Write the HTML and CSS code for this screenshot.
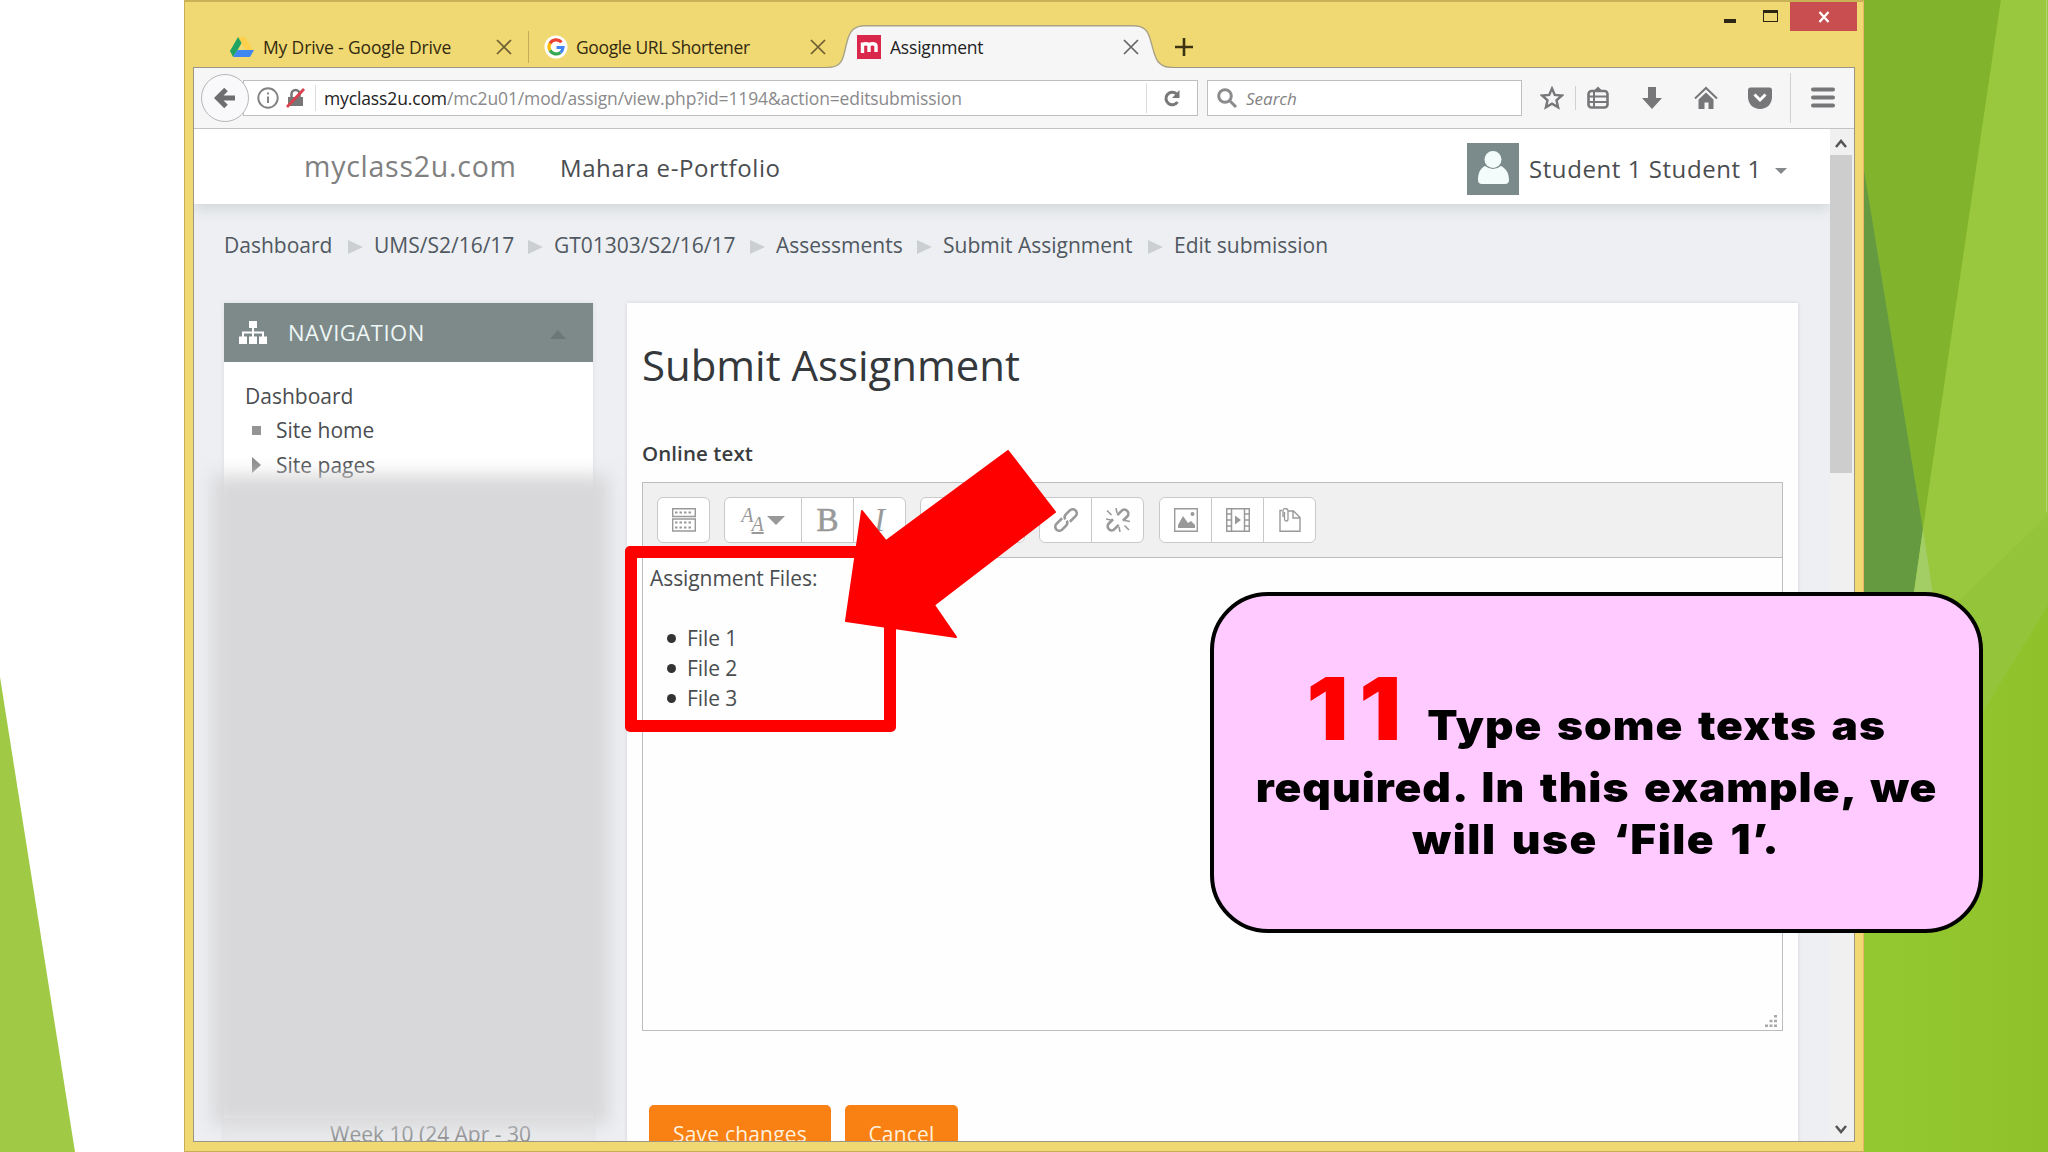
FILE: index.html
```html
<!DOCTYPE html>
<html lang="en">
<head>
<meta charset="utf-8">
<title>Submit Assignment</title>
<link rel="stylesheet" href="styles.css">
</head>
<body>
<main class="slide">
  <svg class="facets" viewBox="0 0 2048 1152" aria-hidden="true">
    <defs>
      <linearGradient id="low" x1="0" y1="0" x2="1" y2="0"><stop offset="0" stop-color="#94c932"/><stop offset="1" stop-color="#8fc12a"/></linearGradient>
    </defs>
    <path d="M0 677 75 1152H0Z" fill="#a0ca46"/>
    <path d="M1860 0H2048V1152H1860Z" fill="url(#low)"/>
    <path d="M1860 0H2001L1923 529 1860 145Z" fill="#82b32d"/>
    <path d="M1860 145 1923 529 1910 620H1860Z" fill="#659a41"/>
    <path d="M2001 0H2048V515L1970 600H1933L1923 529Z" fill="#99c73d"/>
    <path d="M2048 515V605L1975 725 1960 600Z" fill="#94c43a"/>
    <path d="M1923 529 1910 620H1937Z" fill="#a3ce66"/>
    <path d="M2046.500 0V512" stroke="#b2d66f" stroke-width="1"/>
  </svg>

  <section class="window">
    <header class="titlebar">
      <div class="tabs">
        <div class="tab tab-drive">
          <svg class="fav" viewBox="0 0 24 22"><path d="M8 1h7l-8 14-4 6L0 15z" fill="#1fa463"/><path d="M8 1h7l8 13h-7z" fill="#ffd04b"/><path d="M7.500 14H24l-4 7H3z" fill="#3f87f0"/></svg>
          <span class="tab-title">My Drive - Google Drive</span>
          <svg class="x" viewBox="0 0 16 16"><path d="M1 1 15 15M15 1 1 15"/></svg>
        </div>
        <div class="tab tab-google">
          <svg class="fav" viewBox="0 0 24 24"><circle cx="12" cy="12" r="11.500" fill="#fff"/><g fill="none" stroke-width="3.200"><path d="M17.500 7.300A7 7 0 0 0 6 8.400" stroke="#ea4335"/><path d="M6 8.400a7 7 0 0 0 0 7" stroke="#fbbc05"/><path d="M6 15.400a7 7 0 0 0 10.500 2" stroke="#34a853"/><path d="M16.500 17.400A7 7 0 0 0 19 12.500h-6.500" stroke="#4285f4"/></g></svg>
          <span class="tab-title">Google URL Shortener</span>
          <svg class="x" viewBox="0 0 16 16"><path d="M1 1 15 15M15 1 1 15"/></svg>
        </div>
        <div class="tab tab-active">
          <svg class="tab-shape" viewBox="0 0 360 43"><path d="M0 42.500C18 42.500 16 30 20 17 23 5 28 .700 38 .700H306C317 .700 321 5 324 17 328 30 328 42.500 346 42.500V44H0Z" fill="#f6f6f7"/><path d="M0 42.500C18 42.500 16 30 20 17 23 5 28 .700 38 .700H306C317 .700 321 5 324 17 328 30 328 42.500 346 42.500" fill="none" stroke="#a9a387" stroke-width="1.400"/></svg>
          <svg class="fav" viewBox="0 0 24 24"><path d="M0 0h24v24H0z" fill="#d9284c"/><path d="M5.500 18V7.500M5.500 11c0-3 6.500-3 6.500 0v6M12 11c0-3 7-3 7 0v6" stroke="#fff" stroke-width="3.400" fill="none"/></svg>
          <span class="tab-title">Assignment</span>
          <svg class="x" viewBox="0 0 16 16"><path d="M1 1 15 15M15 1 1 15"/></svg>
        </div>
        <svg class="plus" viewBox="0 0 18 18"><path d="M9 0v18M0 9h18"/></svg>
      </div>
      <div class="controls">
        <i class="min"></i><i class="max"></i>
        <span class="close"><svg viewBox="0 0 12 12"><path d="M1.500 1 10.500 11M10.500 1 1.500 11"/></svg></span>
      </div>
    </header>

    <div class="client">
      <div class="toolbar">
        <div class="back"><svg viewBox="0 0 22 22"><path d="M21 11H4M12 2.500 3.500 11 12 19.500" /></svg></div>
        <div class="url">
          <svg class="info" viewBox="0 0 22 22"><circle cx="11" cy="11" r="9.700"/><path d="M11 9.500V16M11 5.500v2"/></svg>
          <svg class="lock" viewBox="0 0 20 20"><path d="M2 9h15v9H2z" fill="#777"/><path d="M5.500 9V6a4 4 0 0 1 8 0v3" fill="none" stroke="#777" stroke-width="2.500"/><path d="M1 19 18 1" stroke="#d9414f" stroke-width="2.800"/></svg>
          <span class="address"><b>myclass2u.com</b>/mc2u01/mod/assign/view.php?id=1194&amp;action=editsubmission</span>
          <span class="reload"><svg viewBox="0 0 18 18"><path d="M13.500 4.800A6.300 6.300 0 1 0 14.500 13" fill="none" stroke="#777" stroke-width="3"/><path d="M16.500 1v8H9z" fill="#777"/></svg></span>
        </div>
        <div class="search"><svg viewBox="0 0 21 21"><circle cx="8" cy="8" r="6.300"/><path d="M12.500 12.500 19 19"/></svg><span>Search</span></div>
        <div class="tools">
          <svg viewBox="0 0 24 24"><path d="m12 2.500 2.800 6.400 7 .7-5.300 4.700 1.600 7L12 17.700l-6.100 3.600 1.600-7L2.200 9.600l7-.7z" fill="none" stroke="#77777a" stroke-width="2.400"/></svg>
          <i class="rule short"></i>
          <svg viewBox="0 0 24 24"><rect x="2.500" y="5" width="19" height="16.500" rx="3" fill="none" stroke="#77777a" stroke-width="2.600"/><path d="M8 4.500 12 .500l4 4z" fill="#77777a"/><path d="M3 10.500h18M3 16h18M8 5v16" stroke="#77777a" stroke-width="2"/></svg>
          <svg viewBox="0 0 24 24"><path d="M8 1h8v11h6L12 23 2 12h6z" fill="#77777a"/></svg>
          <svg viewBox="0 0 24 24"><path d="M1 12.500 12 2l11 10.500" fill="none" stroke="#77777a" stroke-width="2"/><path d="M4.500 13.500 12 6.500l7.500 7V23h-5v-6.500h-4V23h-6z" fill="#77777a"/></svg>
          <svg viewBox="0 0 24 24"><path d="M2.500 1.500h19q2.500 0 2.500 2.500v7c0 7-5 12-12 12S0 18 0 11V4q0-2.500 2.500-2.500z" fill="#77777a"/><path d="m6.500 8.500 5.500 5.500 5.500-5.500" fill="none" stroke="#fff" stroke-width="3"/></svg>
          <i class="rule tall"></i>
          <svg viewBox="0 0 24 24"><path d="M2 4h20M2 12h20M2 20h20" transform="translate(0 -.5)" stroke="#77777a" stroke-width="4" stroke-linecap="round"/></svg>
        </div>
      </div>

      <div class="viewport">
        <div class="page">
          <nav class="site-head">
            <span class="brand">myclass2u.com</span>
            <span class="portfolio">Mahara e-Portfolio</span>
            <span class="avatar"><svg viewBox="0 0 52 52"><rect width="52" height="52" fill="#7b8a8a"/><ellipse cx="26" cy="16.500" rx="8.500" ry="8.500" fill="#f4fbfb"/><path d="M11 37c0-8 3-12 7-14q8 6 16 0c4 2 8 6 8 14q0 4-4 4H15q-4 0-4-4z" fill="#f4fbfb"/></svg></span>
            <span class="user">Student 1 Student 1</span>
            <i class="caret"></i>
          </nav>
          <div class="crumbs">
            <span class="c1">Dashboard</span><i></i><span class="c2">UMS/S2/16/17</span><i></i><span class="c3">GT01303/S2/16/17</span><i></i><span class="c4">Assessments</span><i></i><span class="c5">Submit Assignment</span><i></i><span class="c6">Edit submission</span>
          </div>
          <div class="columns">
            <aside class="block">
              <h2 class="block-head">
                <svg class="sitemap" viewBox="0 0 28 23"><path d="M10 0h8v7h-8zM0 15.500h8V23H0zM10 15.500h8V23h-8zM20 15.500h8V23h-8z" fill="#fff"/><path d="M14 6v10M4 16v-4.500h20V16" fill="none" stroke="#fff" stroke-width="2"/></svg>
                <span>NAVIGATION</span><i class="up"></i>
              </h2>
              <ul class="tree">
                <li>Dashboard</li>
                <li class="sub"><i class="square"></i>Site home</li>
                <li class="sub"><i class="right"></i>Site pages</li>
              </ul>
              <div class="week">Week 10 (24 Apr - 30</div>
              <div class="mask"></div>
            </aside>
            <section class="panel">
              <h1>Submit Assignment</h1>
              <div class="label">Online text</div>
              <div class="editor">
                <div class="editbar">
                  <div class="group"><span><svg viewBox="0 0 24 24"><path d="M.700.700h22.600v7.800H.700zM.700 11h22.600v12H.700z" fill="none" stroke="#999" stroke-width="1.400"/><path d="M3 4.500h18M3 14.500h18M3 19.500h18" stroke="#999" stroke-width="2" stroke-dasharray="2.500 2"/></svg></span></div>
                  <div class="group"><span class="styles"><em>A</em><em class="under">A</em><i></i></span><span class="serif bold">B</span><span class="serif italic">I</span></div>
                  <div class="group"><span><svg viewBox="0 0 24 24"><path d="M8 4h15M8 12h15M8 20h15M1 4h3M1 12h3M1 20h3" stroke="#999" stroke-width="2"/></svg></span><span><svg viewBox="0 0 24 24"><path d="M8 4h15M8 12h15M8 20h15M2 1v6M2 9v6M2 17v6" stroke="#999" stroke-width="2"/></svg></span></div>
                  <div class="group link"><span><svg viewBox="0 0 24 24"><g fill="none" stroke="#999" stroke-width="2.600" transform="rotate(-45 12 12)"><path d="M10.500 8H2.500a4 4 0 0 0 0 8h6a4 4 0 0 0 3.500-3M13.500 16h8a4 4 0 0 0 0-8h-6a4 4 0 0 0-3.500 3"/></g></svg></span><span><svg viewBox="0 0 24 24"><g fill="none" stroke="#999" stroke-width="2.600" transform="rotate(-45 12 12)"><path d="M9 8H3a4 4 0 0 0 0 8h6M15 16h6a4 4 0 0 0 0-8h-6"/></g><path d="M1 2.500 5.500 7M10 0l1 5M0 11l5 1M23 22l-4.500-4.500M14 24l-1-5M24 13.500l-5-1" stroke="#999" stroke-width="1.600"/></svg></span></div>
                  <div class="group"><span><svg viewBox="0 0 24 24"><path d="M.700.700h22.600v22.600H.700z" fill="none" stroke="#999" stroke-width="1.400"/><path d="M4 20v-3l5-9 5 7 3-2 4 4v3z" fill="#999"/><circle cx="18.500" cy="6" r="2" fill="#999"/></svg></span><span><svg viewBox="0 0 24 24"><path d="M.700.700h22.600v22.600H.700zM5.500.700v22.600M18.500.700v22.600M.700 6h4.800M.700 12h4.800M.700 18h4.800M18.500 6h4.800M18.500 12h4.800M18.500 18h4.800" fill="none" stroke="#999" stroke-width="1.500"/><path d="m9 7.500 6 4.500-6 4.500z" fill="#999"/></svg></span><span><svg viewBox="0 0 24 24"><path d="M4 2.500H2v20.800h20V9.500L15.500 3H10M15 3v7h7" fill="none" stroke="#999" stroke-width="1.400"/><path d="M5 9V3q0-2.500 2.500-2.500T10 3v8q0 2-1.700 2T6.500 11V4" fill="none" stroke="#999" stroke-width="1.300"/></svg></span></div>
                </div>
                <div class="content">
                  <p>Assignment Files:</p>
                  <ul><li>File 1</li><li>File 2</li><li>File 3</li></ul>
                  <svg class="grip" viewBox="0 0 12 12"><path d="M9 0h3v2.500H9zM9 4.700h3v2.500H9zM4.500 4.700h3v2.500h-3zM9 9.400h3v2.500H9zM4.500 9.400h3v2.500h-3zM0 9.400h3v2.500H0z" fill="#aaa"/></svg>
                </div>
              </div>
              <div class="actions"><span class="save">Save changes</span><span class="cancel">Cancel</span></div>
            </section>
          </div>
        </div>
        <div class="scroll">
          <svg viewBox="0 0 12 9"><path d="m1 8 5-6 5 6"/></svg>
          <i class="thumb"></i>
          <svg viewBox="0 0 12 9"><path d="m1 1 5 6 5-6"/></svg>
        </div>
      </div>
    </div>
  </section>

  <div class="frame"></div>
  <svg class="arrow" viewBox="0 0 212 189"><path d="M163 1 210 62 89 155 111 187 1 171 17 61 41 91Z" fill="#f00" stroke="#f00" stroke-width="2" stroke-linejoin="round"/></svg>
  <div class="callout">
    <div class="line l1"><span class="num">11</span> <span class="t1">Type some texts as</span></div>
    <div class="line l2">required. In this example, we</div>
    <div class="line l3">will use ‘File 1’.</div>
  </div>
</main>
</body>
</html>
```
FILE: styles.css
```css
* { box-sizing: border-box; }
body { margin: 0; background: #fff; font-family: "Open Sans", "Noto Sans", sans-serif; color: #4a4d50; }
h1, h2, p, ul { margin: 0; padding: 0; font-weight: 400; }
li { list-style: none; }
svg { display: block; flex: none; }
span, i { flex: none; }
.slide { position: relative; width: 2048px; height: 1152px; overflow: hidden; }
.facets { position: absolute; inset: 0; width: 2048px; height: 1152px; }

/* browser window */
.window { position: absolute; left: 184px; top: 0; width: 1680px; height: 1152px; background: #f0d972; border: 1px solid #c8ae55; border-right-color: #e8b56a; border-top: 2px solid #c9b155; padding: 0 8px 9px; display: flex; flex-direction: column; }
.titlebar { height: 65px; flex: none; display: flex; justify-content: space-between; margin-right: -2px; }
.tabs { display: flex; align-items: flex-end; color: #33290f; font-size: 17.500px; white-space: nowrap; }
.tab { display: flex; align-items: center; height: 40px; position: relative; }
.tab-drive { width: 336px; padding-left: 37px; border-right: 1px solid #c4ad58; height: 32px; margin-bottom: 4px; }
.tab-drive .fav { width: 24px; height: 22px; }
.tab-drive .tab-title { width: 233px; margin-left: 9px; letter-spacing: -.150px; }
.tab-google { width: 298px; padding-left: 15px; }
.fav { width: 24px; height: 24px; position: relative; }
.tab-google .tab-title { width: 234px; margin-left: 8px; letter-spacing: -.370px; }
.x { width: 16px; height: 16px; stroke: #6d5d31; stroke-width: 1.700; position: relative; }
.tab-active { width: 346px; padding-left: 30px; color: #222; }
.tab-shape { position: absolute; left: 0; bottom: -1px; width: 360px; height: 43px; }
.tab-active .tab-title { position: relative; width: 233px; margin-left: 9px; letter-spacing: -.200px; }
.tab-active .x { stroke: #666; }
.plus { width: 18px; height: 18px; stroke: #3c3212; stroke-width: 2.600; margin: 0 0 11px 2px; }
.controls { display: flex; align-items: flex-start; }
.min { width: 12px; height: 4px; background: #2e2615; margin: 17px 27px 0 0; }
.max { width: 15px; height: 12px; border: 1.500px solid #2e2615; border-top-width: 3px; margin: 8px 12px 0 0; }
.close { width: 67px; height: 29px; background: #c94e50; display: flex; align-items: center; justify-content: center; }
.close svg { width: 12px; height: 12px; stroke: #fff; stroke-width: 2.300; }

.client { flex: 1; min-height: 0; border: 1px solid #9c9684; background: #f6f6f7; display: flex; flex-direction: column; overflow: hidden; }
.toolbar { height: 61px; flex: none; border-bottom: 1px solid #c3c3c5; display: flex; align-items: center; padding-left: 7px; background: #f6f6f7; }
.back { width: 48px; height: 48px; border: 1.500px solid #b6b6b8; border-radius: 50%; background: #f9f9fb; display: flex; align-items: center; justify-content: center; position: relative; z-index: 1; flex: none; }
.back svg { width: 22px; height: 22px; fill: none; stroke: #6e6e70; stroke-width: 5; }
.url { margin-left: -6px; width: 955px; height: 36px; border: 1px solid #bfbfc1; background: #fff; display: flex; align-items: center; flex: none; }
.info { width: 22px; height: 22px; margin-left: 13px; fill: none; stroke: #828284; stroke-width: 1.900; }
.lock { width: 20px; height: 20px; margin-left: 7px; }
.address { margin-left: 9px; border-left: 1px solid #dcdcdc; padding-left: 8px; width: 831px; line-height: 26px; font-size: 17.500px; letter-spacing: -.130px; color: #8a8a8c; white-space: nowrap; }
.address b { font-weight: 400; color: #222; }
.reload { border-left: 1px solid #dcdcdc; height: 30px; flex: 1; display: flex; align-items: center; justify-content: center; }
.reload svg { width: 18px; height: 18px; }
.search { margin-left: 9px; width: 315px; height: 36px; border: 1px solid #bfbfc1; background: #fff; display: flex; align-items: center; padding-left: 9px; font-size: 17px; font-style: italic; color: #828284; gap: 8px; flex: none; }
.search svg { width: 21px; height: 21px; fill: none; stroke: #8b8b8d; stroke-width: 3; }
.tools { display: flex; align-items: center; margin-left: 18px; }
.tools svg { width: 24px; height: 24px; }
.tools svg + svg { margin-left: 30px; }
.rule { width: 1px; background: #d0d0d2; }
.short { height: 24px; margin: 0 10px 0 11px; }
.tall { height: 50px; margin: 0 20px 0 18px; }

.viewport { flex: 1; min-height: 0; display: flex; }
.page { width: 1636px; background: #edeff2; flex: none; overflow: hidden; }
.site-head { height: 75px; background: #fff; box-shadow: 0 3px 14px rgba(90,100,100,.22); display: flex; align-items: center; white-space: nowrap; }
.brand { width: 256px; margin-left: 110px; font-size: 28.500px; letter-spacing: .750px; color: #808080; line-height: 38px; padding-bottom: 2px; }
.portfolio { width: 907px; font-size: 24px; letter-spacing: .600px; padding-top: 1px; }
.avatar svg { width: 52px; height: 52px; }
.avatar { padding-top: 4px; }
.user { width: 246px; margin-left: 10px; font-size: 24px; letter-spacing: .570px; padding-top: 4px; }
.caret { border: 6px solid transparent; border-top-color: #85888a; border-bottom: 0; margin-top: 8px; }
.crumbs { height: 99px; display: flex; padding: 26px 0 0 30px; font-size: 21px; line-height: 30px; white-space: nowrap; color: #505861; }
.crumbs i { border: 7px solid transparent; border-left: 15px solid #cccfd2; border-right: 0; margin: 10px 11px 0 15px; height: 14px; }
.c1 { width: 109px; } .c2 { width: 139px; } .c3 { width: 181px; } .c4 { width: 126px; } .c5 { width: 190px; }
.columns { display: flex; align-items: stretch; height: 840px; }
.block { width: 369px; margin-left: 30px; background: #fff; position: relative; flex: none; box-shadow: 0 0 5px rgba(0,0,0,.08); }
.block-head { height: 59px; background: #7d8a89; color: #eef6f6; font-size: 22px; display: flex; align-items: center; padding-left: 15px; }
.sitemap { width: 28px; height: 23px; margin-right: 21px; }
.block-head span { width: 262px; letter-spacing: .520px; padding-bottom: 1px; }
.up { border: 8px solid transparent; border-bottom: 9px solid #6c7877; border-top: 0; margin-top: 3px; }
.tree { padding: 17px 21px; font-size: 21px; line-height: 34.300px; }
.sub { display: flex; align-items: center; padding-left: 7px; }
.square { width: 9px; height: 9px; background: #949494; margin-right: 15px; }
.right { border: 8px solid transparent; border-left: 9px solid #8c8c8c; border-right: 0; margin-right: 15px; }
.mask { position: absolute; left: -12px; right: -16px; top: 172px; height: 650px; background: #d8d7d9; filter: blur(9px); }
.week { position: absolute; left: 0; right: 0; top: 815px; height: 50px; padding-left: 106px; font-size: 21px; line-height: 32px; background: #e9eaec; color: #8d8f91; white-space: nowrap; }

/* main panel */
.panel { width: 1171px; margin-left: 34px; background: #fefefe; padding: 32px 15px 0 15px; box-shadow: 0 0 4px rgba(0,0,0,.12); flex: none; position: relative; }
h1 { font-size: 41.900px; line-height: 60px; color: #35383b; white-space: nowrap; }
.label { margin-top: 43px; font-size: 20.500px; line-height: 30px; font-weight: 600; color: #3a3d40; letter-spacing: .080px; }
.editor { margin-top: 14px; height: 549px; border: 1.500px solid #bdbdc0; display: flex; flex-direction: column; }
.editbar { height: 75px; background: #f0f0f1; border-bottom: 1.500px solid #bdbdc0; display: flex; align-items: center; padding-left: 14px; flex: none; }
.group { display: flex; height: 46px; border: 1.500px solid #c9c9cb; border-radius: 6px; background: #fff; margin-right: 14px; overflow: hidden; }
.group > span { width: 51px; display: flex; align-items: center; justify-content: center; }
.group > span + span { border-left: 1px solid #c9c9cb; width: 52px; }
.group svg { width: 24px; height: 24px; }
.group .styles { width: 76px; }
.styles em { font: italic 20px/20px "Liberation Serif", serif; color: #999; margin-top: -10px; }
.styles .under { text-decoration: underline; margin: 7px 3px 0 -2px; }
.styles i { border: 9px solid transparent; border-top: 9px solid #999; border-bottom: 0; }
.serif { font: 33px/40px "Liberation Serif", serif; color: #999; }
.bold { -webkit-text-stroke: .600px #999; }
.italic { font-style: italic; }
.link + .group { margin-left: 1px; }
.content { flex: 1; position: relative; padding: 5px 7px; font-size: 21px; line-height: 30px; letter-spacing: -.080px; }
.content ul { padding: 30px 0 0 37px; }
.content li { position: relative; }
.content li::before { content: ""; position: absolute; left: -20px; top: 11px; width: 9px; height: 9px; border-radius: 50%; background: #333; }
.grip { position: absolute; right: 5px; bottom: 3px; width: 12px; height: 12px; }
.actions { display: flex; gap: 14px; margin: 74px 0 0 7px; }
.actions span { height: 60px; line-height: 58px; background: #f98012; color: #fff0dc; border-radius: 5px; text-align: center; font-size: 21px; letter-spacing: .200px; }
.save { width: 182px; } .cancel { width: 113px; }

.scroll { flex: 1; background: #f0f0f1; display: flex; flex-direction: column; align-items: center; padding: 10px 3px 7px 0; }
.scroll svg { width: 12px; height: 9px; fill: none; stroke: #555; stroke-width: 2.500; }
.thumb { width: 22px; height: 318px; background: #cdcdcd; margin: 7px 0 auto; }

/* annotations */
.frame { position: absolute; left: 625px; top: 546px; width: 271px; height: 186px; border: 12px solid #f00; border-radius: 5px; }
.arrow { position: absolute; left: 845px; top: 450px; width: 212px; height: 189px; }
.callout { position: absolute; left: 1210px; top: 592px; width: 773px; height: 341px; background: #fecaff; border: 4.500px solid #000; border-radius: 58px; font-family: Inter, sans-serif; font-weight: 900; color: #000; font-size: 41px; display: flex; flex-direction: column; align-items: center; white-space: nowrap; }
.line { line-height: 52px; transform: scaleX(1.08); letter-spacing: .900px; word-spacing: 4.500px; }
.l1 { display: flex; align-items: baseline; padding-top: 58px; height: 165px; line-height: 110px; }
.num { color: #f00; font-size: 86px; letter-spacing: 10px; margin-right: 14px; }
.l2 { height: 52px; }
.l3 { letter-spacing: 1.400px; }
```
